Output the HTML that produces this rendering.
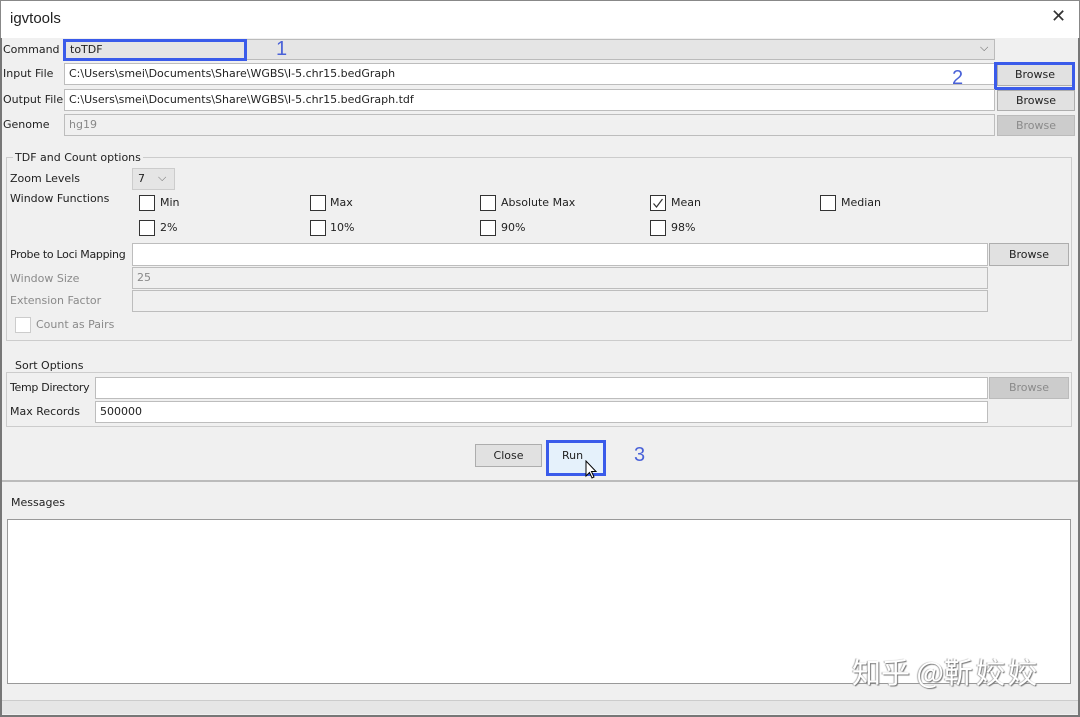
<!DOCTYPE html>
<html><head><meta charset="utf-8"><style>
*{box-sizing:border-box;margin:0;padding:0}
body{width:1080px;height:717px;background:#f0f0f0;font-family:"DejaVu Sans","Liberation Sans",sans-serif;font-size:11px;color:#222;position:relative;overflow:hidden}
.a{position:absolute}
.f{position:absolute;background:#fff;border:1px solid #bdbdbd;padding-left:4px;line-height:20px;font-size:11px}
.d{background:#f0f0f0;color:#888}
.b{position:absolute;background:#e1e1e1;border:1px solid #adadad;text-align:center;line-height:19px;font-size:11px}
.cb{position:absolute;width:16px;height:16px;background:#fff;border:1px solid #333}
.l{position:absolute;font-size:11px;white-space:nowrap}
.g{color:#8a8a8a}
.box{position:absolute;border:3px solid #3a5bea}
.n{position:absolute;color:#4a62d8;font-size:20px;font-family:"Liberation Sans",sans-serif}
</style></head><body>
<div class="a" style="left:0;top:0;width:1080px;height:38px;background:#fff;border:1px solid #888;border-bottom:none"></div>
<div class="l" style="left:10px;top:10px;font-size:15px;font-family:'Liberation Sans',sans-serif">igvtools</div>
<div class="l" style="left:1051px;top:6px;font-size:18px;font-family:'Liberation Sans',sans-serif;color:#333">✕</div>
<div class="a" style="left:0;top:38px;width:2px;height:679px;background:#777"></div>
<div class="a" style="left:1078px;top:38px;width:2px;height:679px;background:#777"></div>

<div class="l" style="left:3px;top:43px">Command</div>
<div class="a" style="left:64px;top:39px;width:931px;height:21px;background:#e5e5e5;border:1px solid #bbb"></div>
<div class="l" style="left:70px;top:43px">toTDF</div>
<div class="l" style="left:980px;top:41px;color:#555">⌵</div>
<div class="box" style="left:63px;top:39px;width:184px;height:22px"></div>
<div class="n" style="left:276px;top:38px">1</div>

<div class="l" style="left:3px;top:67px">Input File</div>
<div class="f" style="left:64px;top:63px;width:931px;height:22px">C:\Users\smei\Documents\Share\WGBS\I-5.chr15.bedGraph</div>
<div class="n" style="left:952px;top:67px">2</div>
<div class="b" style="left:997px;top:64px;width:76px;height:22px">Browse</div>
<div class="box" style="left:994px;top:62px;width:81px;height:28px"></div>

<div class="l" style="left:3px;top:93px">Output File</div>
<div class="f" style="left:64px;top:89px;width:931px;height:22px">C:\Users\smei\Documents\Share\WGBS\I-5.chr15.bedGraph.tdf</div>
<div class="b" style="left:997px;top:90px;width:78px;height:21px">Browse</div>

<div class="l" style="left:3px;top:118px">Genome</div>
<div class="f d" style="left:64px;top:114px;width:931px;height:22px">hg19</div>
<div class="b g" style="left:997px;top:115px;width:78px;height:21px;background:#ccc;border-color:#bbb">Browse</div>

<div class="a" style="left:6px;top:157px;width:1066px;height:184px;border:1px solid #ccc"></div>
<div class="l" style="left:13px;top:151px;background:#f0f0f0;padding:0 2px">TDF and Count options</div>
<div class="l" style="left:10px;top:172px">Zoom Levels</div>
<div class="a" style="left:132px;top:168px;width:43px;height:22px;background:#e5e5e5;border:1px solid #ccc"></div>
<div class="l" style="left:138px;top:172px">7</div><div class="l" style="left:158px;top:171px;color:#666">⌵</div>
<div class="l" style="left:10px;top:192px">Window Functions</div>
<div class="cb" style="left:139px;top:195px"></div><div class="l" style="left:160px;top:196px">Min</div>
<div class="cb" style="left:310px;top:195px"></div><div class="l" style="left:330px;top:196px">Max</div>
<div class="cb" style="left:480px;top:195px"></div><div class="l" style="left:501px;top:196px">Absolute Max</div>
<div class="cb" style="left:650px;top:195px"></div>
<svg class="a" style="left:650px;top:195px" width="16" height="16"><path d="M3.5 8.5 L6.5 12 L12.5 4" fill="none" stroke="#333" stroke-width="1.2"/></svg>
<div class="l" style="left:671px;top:196px">Mean</div>
<div class="cb" style="left:820px;top:195px"></div><div class="l" style="left:841px;top:196px">Median</div>
<div class="cb" style="left:139px;top:220px"></div><div class="l" style="left:160px;top:221px">2%</div>
<div class="cb" style="left:310px;top:220px"></div><div class="l" style="left:330px;top:221px">10%</div>
<div class="cb" style="left:480px;top:220px"></div><div class="l" style="left:501px;top:221px">90%</div>
<div class="cb" style="left:650px;top:220px"></div><div class="l" style="left:671px;top:221px">98%</div>
<div class="l" style="left:10px;top:248px;letter-spacing:-0.3px">Probe to Loci Mapping</div>
<div class="f" style="left:132px;top:243px;width:856px;height:23px"></div>
<div class="b" style="left:989px;top:243px;width:80px;height:23px;line-height:21px">Browse</div>
<div class="l g" style="left:10px;top:272px">Window Size</div>
<div class="f d" style="left:132px;top:267px;width:856px;height:22px">25</div>
<div class="l g" style="left:10px;top:294px">Extension Factor</div>
<div class="f d" style="left:132px;top:290px;width:856px;height:22px"></div>
<div class="cb" style="left:15px;top:317px;border-color:#ccc"></div><div class="l g" style="left:36px;top:318px">Count as Pairs</div>

<div class="a" style="left:6px;top:372px;width:1066px;height:55px;border:1px solid #ccc"></div>
<div class="l" style="left:13px;top:359px;background:#f0f0f0;padding:0 2px">Sort Options</div>
<div class="l" style="left:10px;top:381px;letter-spacing:-0.3px">Temp Directory</div>
<div class="f" style="left:95px;top:377px;width:893px;height:22px"></div>
<div class="b g" style="left:989px;top:377px;width:80px;height:22px;background:#ccc;border-color:#bbb">Browse</div>
<div class="l" style="left:10px;top:405px">Max Records</div>
<div class="f" style="left:95px;top:401px;width:893px;height:22px">500000</div>

<div class="b" style="left:475px;top:444px;width:67px;height:23px;line-height:21px">Close</div>
<div class="a" style="left:546px;top:440px;width:60px;height:36px;background:#e5f1fb"></div>
<div class="l" style="left:562px;top:449px">Run</div>
<div class="box" style="left:546px;top:440px;width:60px;height:36px"></div>
<div class="n" style="left:634px;top:444px">3</div>
<svg class="a" style="left:585px;top:460px" width="14" height="22"><path d="M1 1 L1 16 L4.5 12.5 L7 18 L9 17 L6.5 11.5 L11 11.5 Z" fill="#fff" stroke="#000" stroke-width="1"/></svg>

<div class="a" style="left:2px;top:480px;width:1076px;height:2px;background:#bbb"></div>
<div class="l" style="left:11px;top:496px">Messages</div>
<div class="a" style="left:7px;top:519px;width:1064px;height:165px;background:#fff;border:1px solid #999"></div>
<div class="l" style="left:852px;top:654px;font-size:29px;color:#fff;font-family:'Noto Sans CJK SC',sans-serif;text-shadow:1px 1px 1px #777,-1px 0 1px #aaa;line-height:34px">知乎 @<span style="letter-spacing:3px">靳姣姣</span></div>
<div class="a" style="left:2px;top:700px;width:1076px;height:14px;background:#e6e6e6;border-top:1px solid #ccc"></div>
<div class="a" style="left:0;top:715px;width:1080px;height:2px;background:#777"></div>
</body></html>
